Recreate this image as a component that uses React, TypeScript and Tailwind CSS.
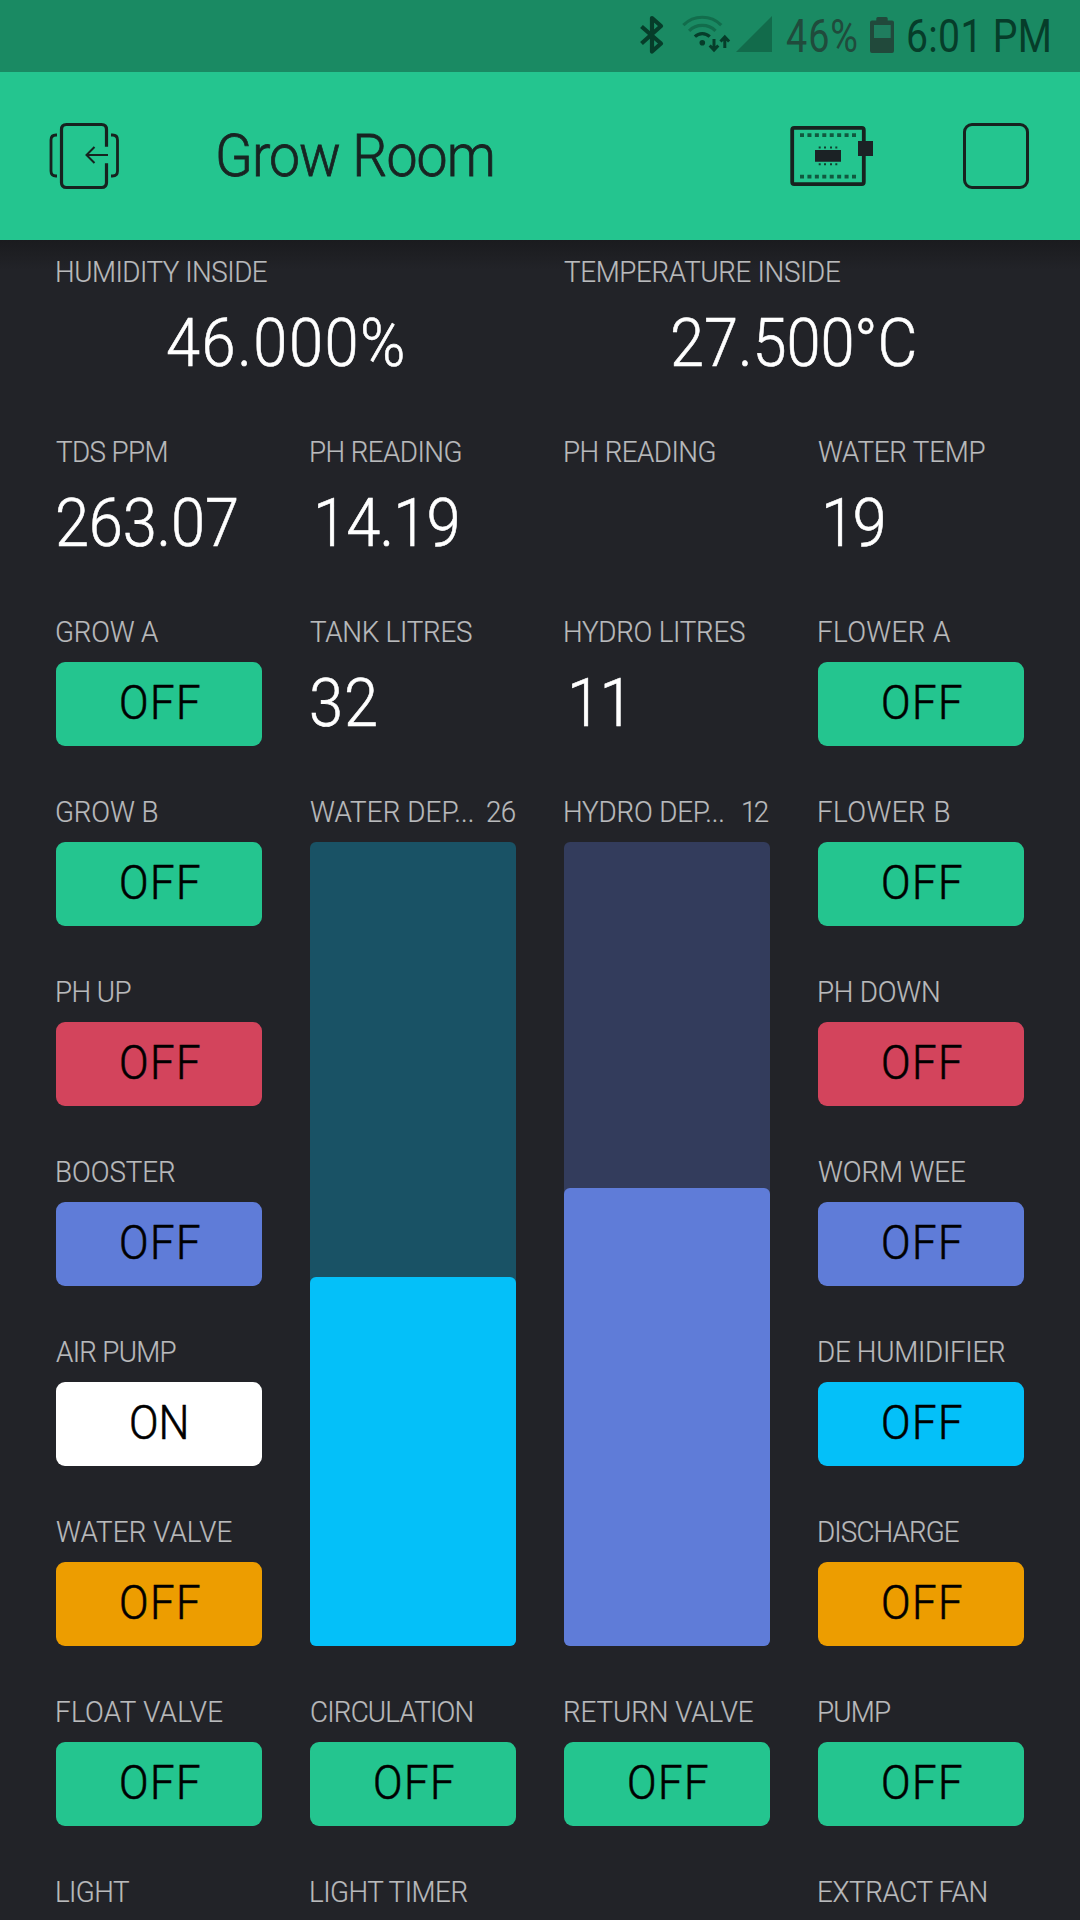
import type { ReactNode } from "react";

type Ink = { text: string; x: number; w: number };

const canvas = document.createElement("canvas").getContext("2d")!;

/** Letter spacing and indent that make a line's ink start at x and span w, with glyphs narrowed by `narrow`. */
function fit({ text, x, w }: Ink, size: number, weight: number, narrow: number) {
  canvas.font = `${weight} ${size}px Roboto`;
  const m = canvas.measureText(text);
  const ink = m.actualBoundingBoxLeft + m.actualBoundingBoxRight;
  return {
    letterSpacing: `${(w / narrow - ink) / (text.length - 1)}px`,
    marginLeft: `${x + m.actualBoundingBoxLeft * narrow}px`,
    marginRight: "-60px",
    fontSize: `${size}px`,
    fontWeight: weight,
    transform: `scaleX(${narrow})`,
  };
}

function Line({ size, weight = 300, narrow = 0.9, className = "", ...ink }: Ink & {
  size: number; weight?: number; narrow?: number; className?: string;
}) {
  return (
    <span className={`block origin-left whitespace-nowrap ${className}`} style={fit(ink, size, weight, narrow)}>
      {ink.text}
    </span>
  );
}

function Label(ink: Ink) {
  return <Line size={29.5} narrow={0.94} className="leading-[42px] text-[#b9babc] [-webkit-text-stroke:0.2px_#b9babc]" {...ink} />;
}

function Widget({ label, className = "", children }: { label?: Ink; className?: string; children?: ReactNode }) {
  return (
    <div className={`flex min-w-0 flex-col ${className}`}>
      <div className="mb-[9px] h-[42px] shrink-0">{label && <Label {...label} />}</div>
      {children}
    </div>
  );
}

function Value(ink: Ink) {
  return <Line size={67.5} narrow={0.91} className="leading-[81px] text-white [-webkit-text-stroke:0.6px_white]" {...ink} />;
}

function Toggle({ color, on = false }: { color: string; on?: boolean }) {
  return (
    <button className={`flex h-[84px] w-full items-start rounded-[9px] text-left ${color}`}>
      <Line
        text={on ? "ON" : "OFF"}
        x={on ? 75.5 : 65.5}
        w={on ? 54.5 : 77.5}
        size={49}
        narrow={0.89}
        className="leading-[82px] text-black [-webkit-text-stroke:0.6px_black]"
      />
    </button>
  );
}

function Slider({ name, value, track, fill }: { name: Ink; value: Ink; track: string; fill: string }) {
  return (
    <div className="row-span-5 flex min-w-0 flex-col">
      <div className="mb-[9px] grid h-[42px] shrink-0">
        <div className="col-start-1 row-start-1"><Label {...name} /></div>
        <div className="col-start-1 row-start-1"><Label {...value} /></div>
      </div>
      <div className={`flex h-[804px] flex-col justify-end rounded-[6px] ${track}`}>
        <div className={`rounded-[6px] ${fill}`} />
      </div>
    </div>
  );
}

const GREEN = "bg-[#24c58f]";
const RED = "bg-[#d3445c]";
const BLUE = "bg-[#5f7cd8]";
const CYAN = "bg-[#04c0f9]";
const ORANGE = "bg-[#ed9d00]";

function StatusBar() {
  return (
    <div className="flex h-[72px] bg-[#1a8a63]">
      <svg className="ml-[630px] h-[72px] w-[150px] shrink-0" viewBox="630 0 150 72" fill="none">
        <path d="M641.5 26.5 661 43.5 652 51.5V18L661 26 641.5 43.5" stroke="#063d2a" strokeWidth="4.2" strokeLinejoin="round" />
        <path d="M683.4 25.1A26.7 26.7 0 0 1 721.2 25.1M689.1 30.8A18.7 18.7 0 0 1 715.5 30.8" stroke="#126d4c" strokeWidth="3.2" />
        <path d="M694.9 36.6A10.5 10.5 0 0 1 709.7 36.6" stroke="#063d2a" strokeWidth="3.2" />
        <circle cx="702.3" cy="42.7" r="2.8" fill="#063d2a" />
        <path d="M714 39v11M709.7 45.5 714 50l4.300-4.500M724.8 48V37M720.5 41.5 724.8 37l4.300 4.500" stroke="#063d2a" strokeWidth="3" />
        <path d="M772 16v36h-36z" fill="#126b4b" />
      </svg>
      <div className="h-[72px] w-[85px] shrink-0">
        <Line text="46%" x={7} w={70} size={45.5} weight={400} narrow={0.83} className="leading-[73px] text-[#204b3c]" />
      </div>
      <svg className="h-[72px] w-[35px] shrink-0" viewBox="865 0 35 72" fill="#21493b">
        <path d="M876.3 20.5V18.5q0-1.500 1.500-1.500h8.400q1.500 0 1.500 1.500v2h4.300q2 0 2 2V51q0 2-2 2h-20q-2 0-2-2V22.500q0-2 2-2z" />
        <path d="M874 25h16.700v13H874z" fill="#1f7d5e" />
      </svg>
      <div className="h-[72px] w-[170px]">
        <Line text="6:01 PM" x={8} w={141} size={45.5} weight={400} narrow={0.86} className="leading-[73px] text-[#063d2a]" />
      </div>
    </div>
  );
}

const PINS = [0, 1, 2, 3, 4, 5, 6, 7];
const LEGS = [818.7, 824, 830, 835.3];

function Header() {
  return (
    <header className="flex h-[168px] bg-[#24c58f]">
      <svg className="ml-[40px] h-[168px] w-[90px] shrink-0" viewBox="40 72 90 168" fill="none" stroke="#17221f">
        <path d="M106.500 146.700V129.500q0-5-5-5h-35q-5 0-5 5v53q0 5 5 5h35q5 0 5-5V163.300" strokeWidth="3.2" />
        <path d="M57 135h-1q-5 0-5 5v31q0 5 5 5h1M111 135h1.500q5 0 5 5v31q0 5-5 5H111" strokeWidth="2.8" />
        <path d="M108 155H86.500M94.500 147 86.500 155l8 8" strokeWidth="2" />
      </svg>
      <h1 className="w-[640px] shrink-0">
        <Line text="Grow Room" x={88.5} w={273.5} size={59.5} narrow={0.93} className="leading-[169px] text-[#182422] [-webkit-text-stroke:0.8px_#182422]" />
      </h1>
      <svg className="ml-[10px] h-[168px] w-[110px] shrink-0" viewBox="780 72 110 168" fill="#1b2225">
        <rect x="792.2" y="127.9" width="71.6" height="56.2" rx="2" fill="none" stroke="#17221f" strokeWidth="3.8" />
        <path d="M858 141h15v15h-15zM815 150h26v11.700h-26z" />
        {PINS.map((i) => (
          <path key={i} fill="#11593f" d={`M${800 + i * 7.43} 133.300h4v3.800h-4zM${800 + i * 7.43} 174.800h4v3.800h-4z`} />
        ))}
        {LEGS.map((x) => (
          <path key={x} fill="#11402f" d={`M${x} 146.500h2v2h-2zM${x} 163.300h2v2h-2z`} />
        ))}
      </svg>
      <div className="mt-[51px] ml-[73px] size-[66px] rounded-[9px] border-3 border-[#17221f]" />
    </header>
  );
}

export default function App() {
  return (
    <div className="flex h-[1920px] w-[1080px] flex-col overflow-hidden bg-[#222328] font-['Roboto',sans-serif]">
      <StatusBar />
      <Header />
      <div className="-mb-[30px] h-[30px] shrink-0 bg-linear-to-b from-[#1a1b1e] to-[#222328]" />
      <main className="z-10 ml-[56px] grid w-[968px] shrink-0 auto-rows-[180px] grid-cols-4 gap-x-[48px] pt-[11px]">
        <Widget className="col-span-2" label={{ text: "HUMIDITY INSIDE", x: 1, w: 210 }}>
          <Value text="46.000%" x={112} w={235} />
        </Widget>
        <Widget className="col-span-2" label={{ text: "TEMPERATURE INSIDE", x: -0.5, w: 276 }}>
          <Value text="27.500°C" x={109} w={242} />
        </Widget>

        <Widget label={{ text: "TDS PPM", x: -0.5, w: 110 }}><Value text="263.07" x={2} w={179} /></Widget>
        <Widget label={{ text: "PH READING", x: 1, w: 149.5 }}><Value text="14.19" x={8} w={140} /></Widget>
        <Widget label={{ text: "PH READING", x: 1, w: 149.5 }} />
        <Widget label={{ text: "WATER TEMP", x: -0.5, w: 167 }}><Value text="19" x={8} w={58} /></Widget>

        <Widget label={{ text: "GROW A", x: 1, w: 101 }}><Toggle color={GREEN} /></Widget>
        <Widget label={{ text: "TANK LITRES", x: -0.5, w: 162 }}><Value text="32" x={2} w={64} /></Widget>
        <Widget label={{ text: "HYDRO LITRES", x: 1, w: 180 }}><Value text="11" x={8} w={49} /></Widget>
        <Widget label={{ text: "FLOWER A", x: 1, w: 131 }}><Toggle color={GREEN} /></Widget>

        <Widget label={{ text: "GROW B", x: 1, w: 100.5 }}><Toggle color={GREEN} /></Widget>
        <Slider
          name={{ text: "WATER DEP...", x: -0.5, w: 162.5 }}
          value={{ text: "26", x: 177, w: 28 }}
          track="bg-[#195265]"
          fill="h-[369px] bg-[#04c0f9]"
        />
        <Slider
          name={{ text: "HYDRO DEP...", x: 1, w: 158 }}
          value={{ text: "12", x: 179, w: 26 }}
          track="bg-[#333c5c]"
          fill="h-[458px] bg-[#5f7cd8]"
        />
        <Widget label={{ text: "FLOWER B", x: 1, w: 130.5 }}><Toggle color={GREEN} /></Widget>

        <Widget label={{ text: "PH UP", x: 1, w: 73.5 }}><Toggle color={RED} /></Widget>
        <Widget label={{ text: "PH DOWN", x: 1, w: 120 }}><Toggle color={RED} /></Widget>

        <Widget label={{ text: "BOOSTER", x: 1, w: 118 }}><Toggle color={BLUE} /></Widget>
        <Widget label={{ text: "WORM WEE", x: -0.5, w: 147 }}><Toggle color={BLUE} /></Widget>

        <Widget label={{ text: "AIR PUMP", x: -0.5, w: 119.5 }}><Toggle color="bg-white" on /></Widget>
        <Widget label={{ text: "DE HUMIDIFIER", x: 1, w: 186 }}><Toggle color={CYAN} /></Widget>

        <Widget label={{ text: "WATER VALVE", x: -0.5, w: 175.5 }}><Toggle color={ORANGE} /></Widget>
        <Widget label={{ text: "DISCHARGE", x: 1, w: 140 }}><Toggle color={ORANGE} /></Widget>

        <Widget label={{ text: "FLOAT VALVE", x: 1, w: 166 }}><Toggle color={GREEN} /></Widget>
        <Widget label={{ text: "CIRCULATION", x: 1, w: 161.5 }}><Toggle color={GREEN} /></Widget>
        <Widget label={{ text: "RETURN VALVE", x: 1, w: 188 }}><Toggle color={GREEN} /></Widget>
        <Widget label={{ text: "PUMP", x: 1, w: 71 }}><Toggle color={GREEN} /></Widget>

        <Widget label={{ text: "LIGHT", x: 1, w: 72 }} />
        <Widget label={{ text: "LIGHT TIMER", x: 1, w: 157.5 }} />
        <Widget />
        <Widget label={{ text: "EXTRACT FAN", x: 1, w: 168 }} />
      </main>
    </div>
  );
}
